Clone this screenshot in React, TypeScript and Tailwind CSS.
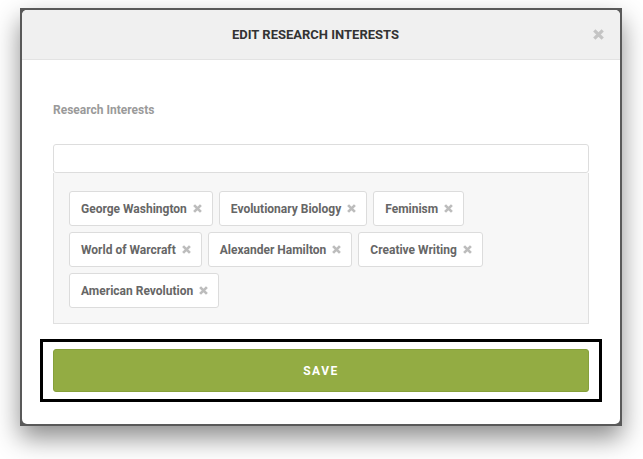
import React from "react";

const XIcon = ({ size = 9, color = "#bdbdbd" }: { size?: number; color?: string }) => (
  <svg width={size} height={size} viewBox="0 0 10 10" className="shrink-0">
    <path d="M1.2 1.2 L8.8 8.8 M8.8 1.2 L1.2 8.8" stroke={color} strokeWidth={3} strokeLinecap="butt" />
  </svg>
);

const rows = [
  ["George Washington", "Evolutionary Biology", "Feminism"],
  ["World of Warcraft", "Alexander Hamilton", "Creative Writing"],
  ["American Revolution"],
];

const Tag = ({ label }: { label: string }) => (
  <div className="flex h-[35px] items-center gap-[6px] rounded-[3px] border border-[#dcdcdc] bg-white pl-[11px] pr-[10px]">
    <span className="text-[12px] font-bold leading-none text-[#666666]">{label}</span>
    <XIcon />
  </div>
);

export default function App() {
  return (
    <div
      className="h-[459px] w-[643px] overflow-hidden bg-white pl-[20px] pt-[8px]"
      style={{ fontFamily: "Roboto, 'Liberation Sans', sans-serif" }}
    >
      <div className="h-[418px] w-[602px] bg-[#595959] p-[2px] shadow-[0_12px_24px_rgba(0,0,0,0.45)]">
        <div className="flex h-full flex-col overflow-hidden rounded-[5px] bg-white">
          <div className="relative flex h-[50px] shrink-0 items-center justify-center border-b border-[#e3e3e3] bg-[#f0f0f0] pr-[11px]">
            <span className="text-[13px] font-bold uppercase leading-none text-[#333333]">
              Edit Research Interests
            </span>
            <div className="absolute right-[16px] top-[19px]">
              <XIcon size={11} color="#c4c4c4" />
            </div>
          </div>
          <div className="flex flex-col px-[31px]">
            <div className="mt-[42px] text-[12px] font-bold leading-[16px] text-[#9a9a9a]">Research Interests</div>
            <div className="mt-[26px] h-[29px] rounded-[3px] border border-[#dddddd] bg-white" />
            <div className="flex flex-col gap-[6px] border border-t-0 border-[#e0e0e0] bg-[#f7f7f7] pb-[15px] pl-[15px] pr-[15px] pt-[18px]">
              {rows.map((row, i) => (
                <div key={i} className="flex gap-[6px]">
                  {row.map((t) => (
                    <Tag key={t} label={t} />
                  ))}
                </div>
              ))}
            </div>
            <div className="-mx-[13px] mt-[15px] border-[3px] border-black px-[10px] py-[7px]">
              <div className="flex h-[43px] items-center justify-center rounded-[3px] border border-[#86a03a] bg-[#93ac43]">
                <span className="text-[12px] font-bold uppercase tracking-[1.5px] text-white">Save</span>
              </div>
            </div>
          </div>
        </div>
      </div>
    </div>
  );
}
